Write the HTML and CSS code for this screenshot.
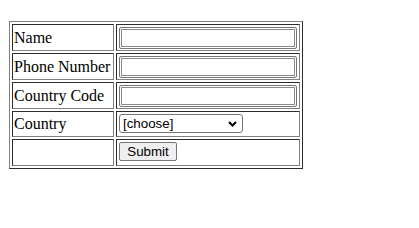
FILE: index.html
```html
<!DOCTYPE html>
<html lang="en">
<head>
    <meta charset="UTF-8">
    <title>Form</title>
    <link rel="stylesheet" href="styles.css">
</head>
<body>
    <div class="topbar"></div>
    <form class="form">
        <table class="form-table">
            <tr>
                <td class="label">Name</td>
                <td><div class="field"><input class="text-input" type="text" name="name"></div></td>
            </tr>
            <tr>
                <td class="label">Phone Number</td>
                <td><div class="field"><input class="text-input" type="text" name="phone"></div></td>
            </tr>
            <tr>
                <td class="label">Country Code</td>
                <td><div class="field"><input class="text-input" type="text" name="code"></div></td>
            </tr>
            <tr>
                <td class="label">Country</td>
                <td>
                    <div class="field field-select">
                        <span class="select-wrap">
                            <select class="select" name="country">
                                <option>[choose]</option>
                            </select>
                            <svg class="chevron" width="9" height="6" viewBox="0 0 9 6">
                                <path d="M1 1 L4.5 4.5 L8 1" fill="none" stroke="#000" stroke-width="2"/>
                            </svg>
                        </span>
                    </div>
                </td>
            </tr>
            <tr>
                <td class="label"></td>
                <td><div class="field field-button"><input class="button" type="submit" value="Submit"></div></td>
            </tr>
        </table>
    </form>
</body>
</html>
```

FILE: styles.css
```css
body {
    font-family: "Liberation Serif", "Times New Roman", serif;
    font-size: 16px;
    color: #000;
    margin: 8px 9px;
}

.topbar {
    height: 4px;
    margin: -8px -9px 0;
    background-color: #f0f0f0;
    border-bottom: 1px solid #dcdcdc;
}

.form {
    margin-top: 16px;
}

.form-table {
    border: 1px outset #808080;
    border-spacing: 2px;
}

.form-table td {
    border: 1px inset #808080;
    padding: 1px;
}

.form-table .label {
    width: 98px;
    white-space: nowrap;
}

.field {
    display: flex;
    align-items: flex-start;
    height: 23px;
}

.text-input {
    box-sizing: border-box;
    width: 178px;
    height: 22px;
    margin: 1px 1px 0;
    padding: 0 3px;
    border: 1px solid #767676;
    border-radius: 2px;
    box-shadow: inset 0 0 0 1px #fff, inset 0 0 0 2px #8a8a8a;
    background-color: #fff;
    font-family: Arial, "Liberation Sans", sans-serif;
    font-size: 13.33px;
}

.field-select {
    height: 22px;
}

.select-wrap {
    position: relative;
    display: block;
    margin: 1px 0 0 1px;
}

.select {
    appearance: none;
    -webkit-appearance: none;
    box-sizing: border-box;
    display: block;
    width: 124px;
    height: 19px;
    margin: 0;
    padding: 0 0 0 3px;
    border: 1px solid #767676;
    border-radius: 3px;
    background-color: #fff;
    color: #000;
    font-family: Arial, "Liberation Sans", sans-serif;
    font-size: 13.33px;
}

.chevron {
    position: absolute;
    right: 6px;
    top: 7px;
    pointer-events: none;
}

.button {
    box-sizing: border-box;
    width: 58px;
    height: 19px;
    margin: 1px 0 0 1px;
    padding: 0;
    border: 1px solid #767676;
    border-radius: 2px;
    background-color: #efefef;
    color: #000;
    font-family: Arial, "Liberation Sans", sans-serif;
    font-size: 13.33px;
}
```
